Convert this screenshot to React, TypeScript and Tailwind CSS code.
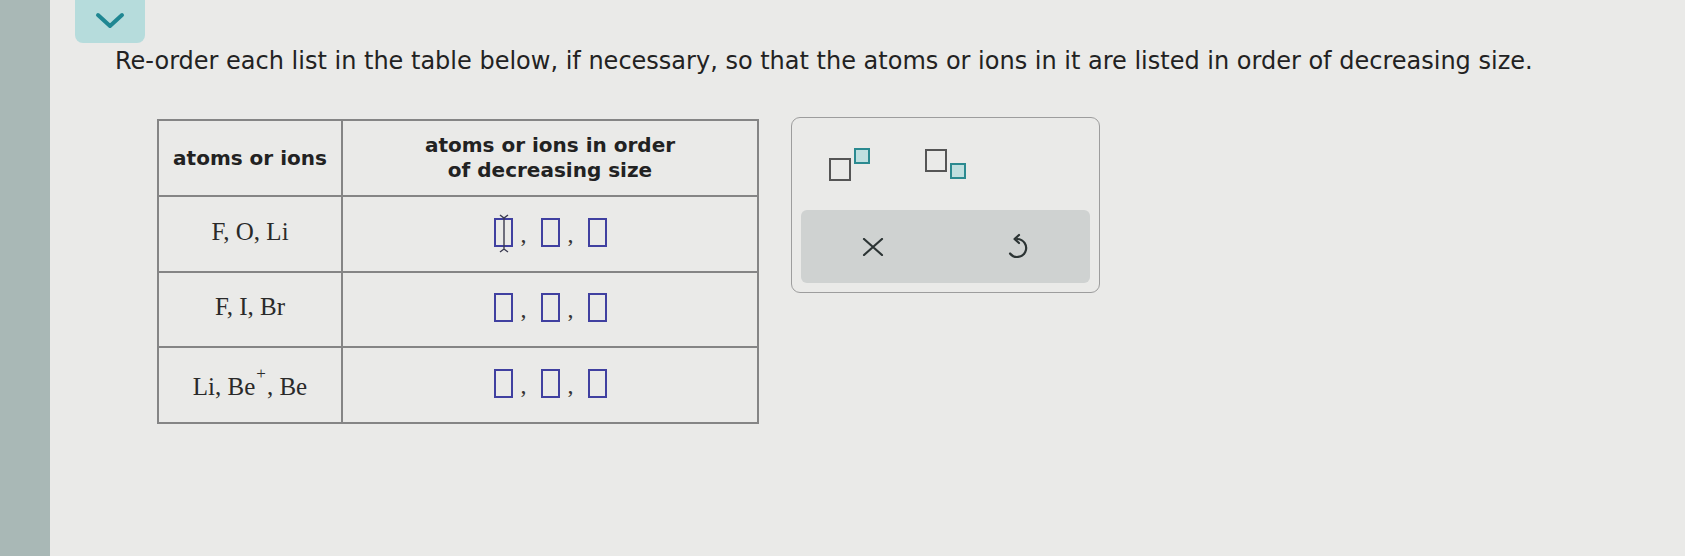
import React from "react";

function AnswerBox({ cursor = false }: { cursor?: boolean }) {
  return (
    <span className="relative inline-block h-[29px] w-[19px] border-2 border-[#4040a0]">
      {cursor && (
        <svg
          className="absolute left-[1px] top-[-6px]"
          width="14"
          height="39"
          viewBox="0 0 14 39"
        >
          <path
            d="M3 1 L7 4 L11 1 M7 4 L7 35 M3 38 L7 35 L11 38"
            stroke="#3a3a50"
            strokeWidth="1.4"
            fill="none"
          />
        </svg>
      )}
    </span>
  );
}

function Comma() {
  return (
    <span className="inline-flex h-[29px] w-[28px] items-end pl-[8px] text-[24px] leading-[26px] text-[#333]">
      ,
    </span>
  );
}

function BoxGroup({ cursor = false }: { cursor?: boolean }) {
  return (
    <div className="mb-[4px] flex items-start">
      <AnswerBox cursor={cursor} />
      <Comma />
      <AnswerBox />
      <Comma />
      <AnswerBox />
    </div>
  );
}

export default function App() {
  const serif = { fontFamily: '"Liberation Serif", "Times New Roman", serif' };
  return (
    <div
      className="flex h-[556px] w-[1685px] overflow-hidden bg-[#eaeae8] text-[#262626]"
      style={{ fontFamily: '"DejaVu Sans", Verdana, sans-serif' }}
    >
      <div className="w-[50px] shrink-0 bg-[#a9b8b6]" />
      <div className="flex-1">
        <div className="ml-[25px] flex h-[43px] w-[70px] items-center justify-center rounded-b-[8px] bg-[#b6dcdc]">
          <svg width="32" height="20" viewBox="0 0 32 20" className="mt-[-2px]">
            <path
              d="M4 4 L16 15 L28 4"
              stroke="#1f8792"
              strokeWidth="4"
              fill="none"
              strokeLinecap="round"
              strokeLinejoin="round"
            />
          </svg>
        </div>

        <p className="ml-[65px] mt-[4px] text-[24px] leading-[28px] text-[#222]">
          Re-order each list in the table below, if necessary, so that the atoms or ions in it are listed in order of decreasing size.
        </p>

        <div className="ml-[107px] mt-[44px] flex items-start gap-[32px]">
          {/* table */}
          <div className="w-[602px] border-2 border-[#858585]">
            <div className="grid grid-cols-[184px_1fr]">
              <div className="flex h-[76px] items-center justify-center border-b-2 border-r-2 border-[#858585] text-[20px] font-bold leading-[25px] text-[#222]">
                atoms or ions
              </div>
              <div className="flex h-[76px] flex-col items-center justify-center border-b-2 border-[#858585] text-center text-[20px] font-bold leading-[25px] text-[#222]">
                <span>atoms or ions in order</span>
                <span>of decreasing size</span>
              </div>

              <div
                className="flex h-[76px] items-center justify-center border-b-2 border-r-2 border-[#858585] pb-[5px] text-[25px] text-[#2a2a2a]"
                style={serif}
              >
                F, O, Li
              </div>
              <div className="flex h-[76px] items-center justify-center border-b-2 border-[#858585]" style={serif}>
                <BoxGroup cursor />
              </div>

              <div
                className="flex h-[75px] items-center justify-center border-b-2 border-r-2 border-[#858585] pb-[5px] text-[25px] text-[#2a2a2a]"
                style={serif}
              >
                F, I, Br
              </div>
              <div className="flex h-[75px] items-center justify-center border-b-2 border-[#858585]" style={serif}>
                <BoxGroup />
              </div>

              <div
                className="flex h-[74px] items-center justify-center border-r-2 border-[#858585] pt-[4px] text-[25px] text-[#2a2a2a]"
                style={serif}
              >
                <span>
                  Li, Be
                  <span className="relative top-[-16px] mx-[1px] text-[17px]">+</span>
                  , Be
                </span>
              </div>
              <div className="flex h-[74px] items-center justify-center" style={serif}>
                <BoxGroup />
              </div>
            </div>
          </div>

          {/* tool panel */}
          <div className="mt-[-2px] flex h-[176px] w-[309px] flex-col rounded-[9px] border-[1.5px] border-[#9d9d9d]">
            <div className="grid flex-1 grid-cols-3 items-center px-[9px]">
              <div className="flex justify-center">
                <div className="flex items-start">
                  <div className="mt-[10px] h-[23px] w-[22px] border-2 border-[#555]" />
                  <div className="ml-[3px] h-[16px] w-[16px] border-2 border-[#2b8a90] bg-[#bfdfdf]" />
                </div>
              </div>
              <div className="flex justify-center">
                <div className="flex items-start">
                  <div className="h-[23px] w-[22px] border-2 border-[#555]" />
                  <div className="ml-[3px] mt-[14px] h-[16px] w-[16px] border-2 border-[#2b8a90] bg-[#bfdfdf]" />
                </div>
              </div>
              <div />
            </div>
            <div className="mx-[9px] mb-[9px] grid h-[73px] grid-cols-2 items-center rounded-[6px] bg-[#cfd2d1]">
              <div className="flex justify-center">
                <svg width="22" height="18" viewBox="0 0 22 18">
                  <path d="M2 1 L20 17 M20 1 L2 17" stroke="#2c3434" strokeWidth="2.2" fill="none" strokeLinecap="round" />
                </svg>
              </div>
              <div className="flex justify-center">
                <svg width="26" height="28" viewBox="0 0 26 28">
                  <path
                    d="M12 6 A9 9 0 1 1 5 20.5"
                    stroke="#2c3434"
                    strokeWidth="2.2"
                    fill="none"
                    strokeLinecap="round"
                  />
                  <path
                    d="M14 2 L9.5 6 L14 10"
                    stroke="#2c3434"
                    strokeWidth="2.2"
                    fill="none"
                    strokeLinecap="round"
                    strokeLinejoin="round"
                  />
                </svg>
              </div>
            </div>
          </div>
        </div>
      </div>
    </div>
  );
}
